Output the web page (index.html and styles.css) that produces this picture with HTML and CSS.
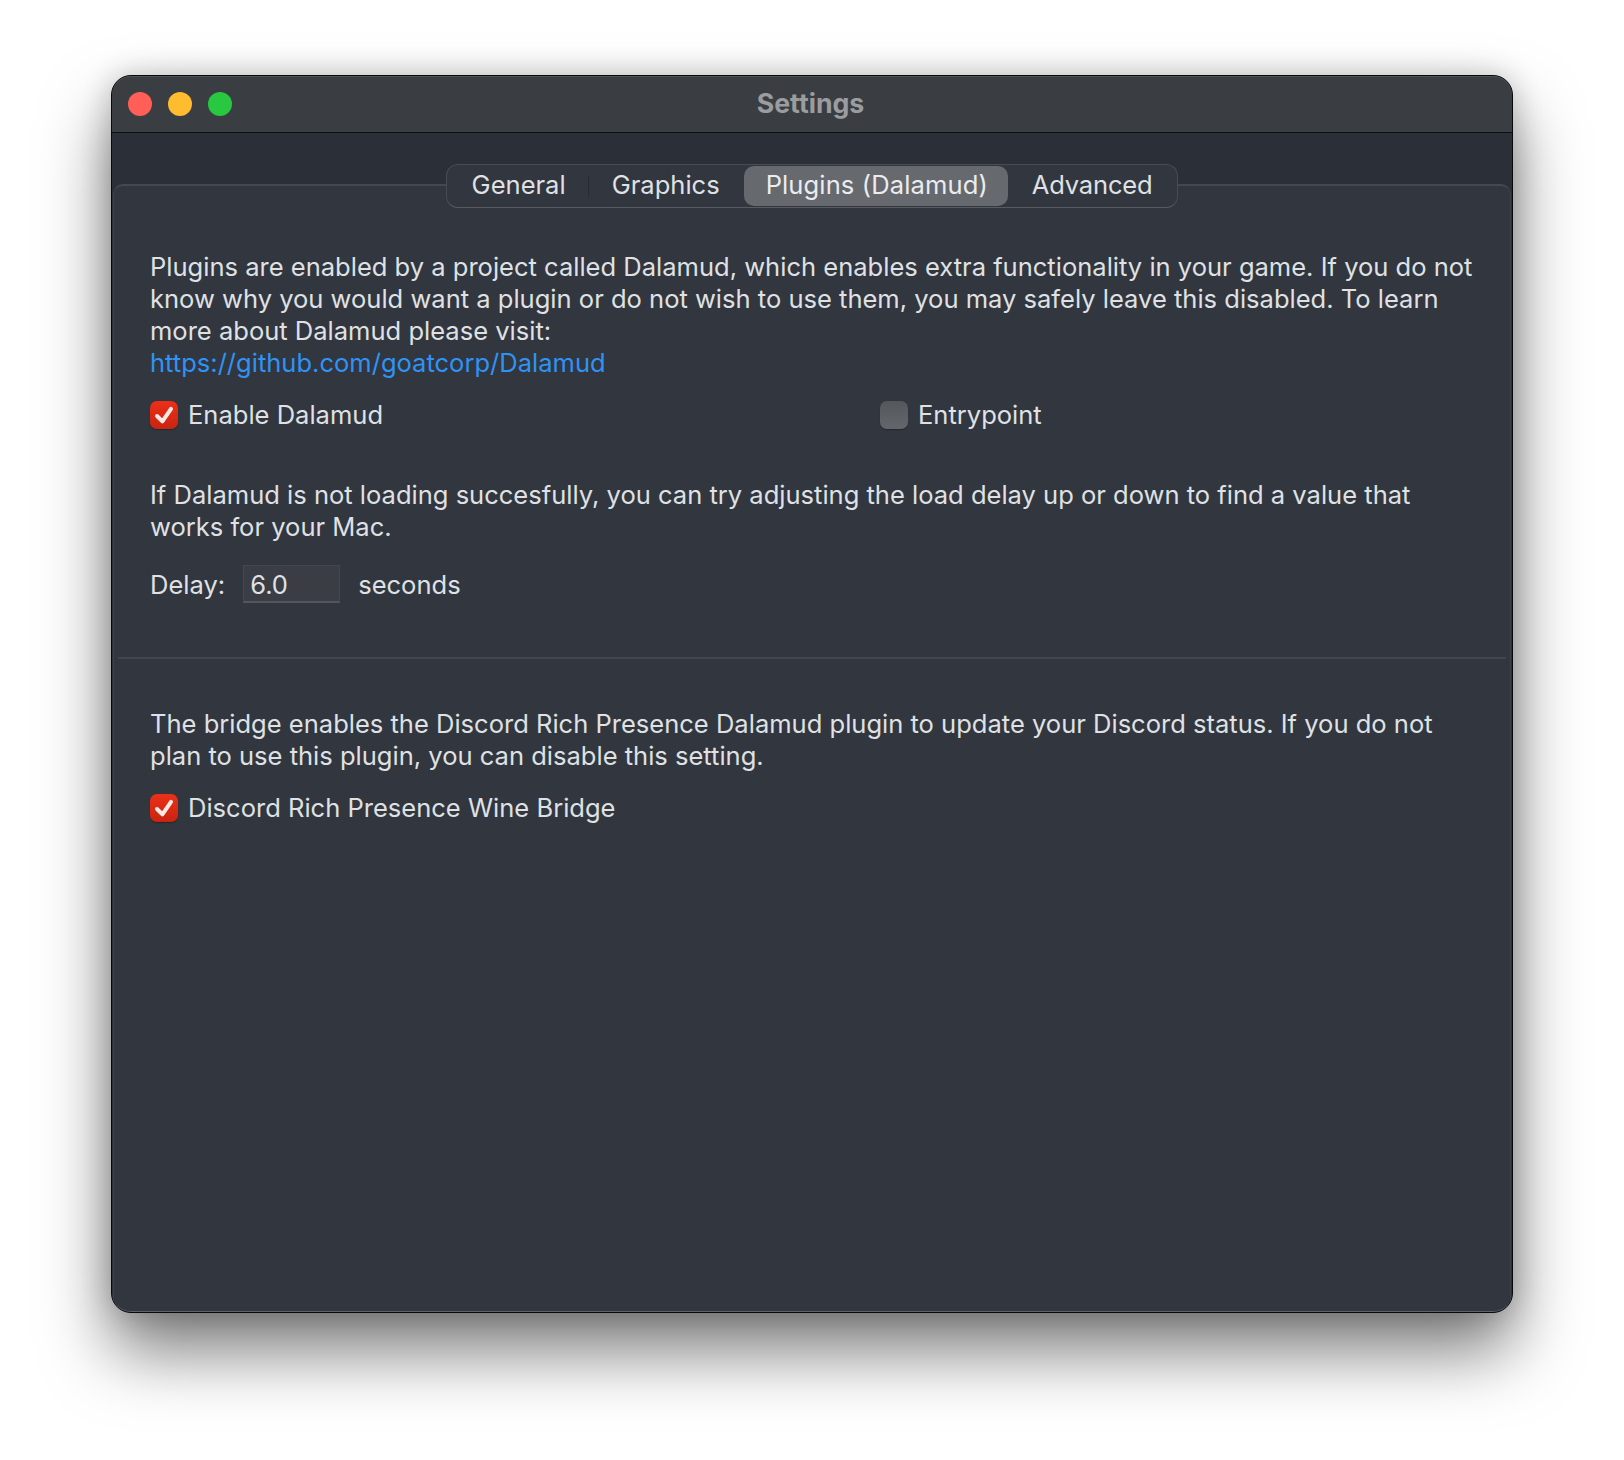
FILE: index.html
```html
<!DOCTYPE html>
<html lang="en">
<head>
    <meta charset="UTF-8">
    <title>Settings</title>
    <link rel="stylesheet" href="styles.css">
</head>
<body>
    <div class="window">
        <div class="titlebar">
            <div class="traffic">
                <span class="light red"></span>
                <span class="light yellow"></span>
                <span class="light green"></span>
            </div>
            <div class="title">Settings</div>
        </div>

        <div class="content">
            <div class="tabs">
                <div class="tab tab-general">General</div>
                <div class="tab tab-graphics">Graphics</div>
                <div class="tab tab-active">Plugins (Dalamud)</div>
                <div class="tab tab-advanced">Advanced</div>
            </div>

            <div class="group">
                <div class="section">
                    <p>Plugins are enabled by a project called Dalamud, which enables extra functionality in your game. If you do not<br>know why you would want a plugin or do not wish to use them, you may safely leave this disabled. To learn<br>more about Dalamud please visit:<br><a href="#" class="link">https://github.com/goatcorp/Dalamud</a></p>

                    <div class="check-row">
                        <label class="check check-half">
                            <span class="box box-on">
                                <svg viewBox="0 0 28 28" width="28" height="28"><path d="M7 15 L12.4 20.4 L21 7.8" fill="none" stroke="#fde8e3" stroke-width="4" stroke-linecap="round" stroke-linejoin="round"/></svg>
                            </span>
                            Enable Dalamud
                        </label>
                        <label class="check">
                            <span class="box box-off"></span>
                            Entrypoint
                        </label>
                    </div>

                    <p class="para-gap">If Dalamud is not loading succesfully, you can try adjusting the load delay up or down to find a value that<br>works for your Mac.</p>

                    <div class="delay-row">
                        <span class="delay-label">Delay:</span>
                        <div class="delay-input">6.0</div>
                        <span class="delay-label">seconds</span>
                    </div>
                </div>

                <div class="divider"></div>

                <div class="section section-bottom">
                    <p>The bridge enables the Discord Rich Presence Dalamud plugin to update your Discord status. If you do not<br>plan to use this plugin, you can disable this setting.</p>

                    <div class="check-row">
                        <label class="check">
                            <span class="box box-on">
                                <svg viewBox="0 0 28 28" width="28" height="28"><path d="M7 15 L12.4 20.4 L21 7.8" fill="none" stroke="#fde8e3" stroke-width="4" stroke-linecap="round" stroke-linejoin="round"/></svg>
                            </span>
                            Discord Rich Presence Wine Bridge
                        </label>
                    </div>
                </div>
            </div>
        </div>
    </div>
</body>
</html>
```

FILE: styles.css
```css
body {
    margin: 0;
    height: 1460px;
    overflow: hidden;
    background-color: #ffffff;
    color: #dfe1e4;
    font-family: Inter, "Noto Sans", sans-serif;
    font-size: 25.54px;
    line-height: 32px;
}

p {
    margin: 0;
}

.window {
    position: relative;
    box-sizing: border-box;
    width: 1402px;
    height: 1238px;
    margin: 75px 0 0 111px;
    display: flex;
    flex-direction: column;
    background-color: #32363e;
    border: 1px solid #08090a;
    border-radius: 20px;
    overflow: hidden;
    box-shadow: 0 38px 68px rgba(0, 0, 0, 0.52), 0 0 30px rgba(0, 0, 0, 0.2);
}

/* light inner edge of the window frame */
.window::after {
    content: "";
    position: absolute;
    top: 0;
    right: 0;
    bottom: 0;
    left: 0;
    border-radius: 19px;
    box-shadow: inset 0 -2px 0 -1px rgba(255, 255, 255, 0.22), inset 0 1px 0 rgba(255, 255, 255, 0.1);
    pointer-events: none;
}

.titlebar {
    position: relative;
    flex: none;
    height: 56px;
    display: flex;
    align-items: center;
    justify-content: center;
    background-color: #3a3e42;
    border-bottom: 1px solid #0e0f11;
}

.traffic {
    position: absolute;
    left: 16px;
    top: 16px;
    display: flex;
    gap: 16px;
}

.light {
    width: 24px;
    height: 24px;
    border-radius: 50%;
}

.red { background-color: #ff5f57; }
.yellow { background-color: #febc2e; }
.green { background-color: #28c840; }

.title {
    color: #9a9c9f;
    font-weight: 700;
    font-size: 26.7px;
    padding-bottom: 2px;
    padding-right: 3px;
}

.content {
    flex: 1;
    display: flex;
    flex-direction: column;
    background-color: #2b3038;
    padding-top: 31px;
}

.tabs {
    position: relative;
    z-index: 1;
    align-self: center;
    box-sizing: border-box;
    height: 44px;
    margin-bottom: -24px;
    padding: 1px 0;
    display: flex;
    align-items: stretch;
    background-color: #32363e;
    border: 1px solid #484c53;
    border-bottom-color: #585c62;
    border-radius: 12px;
}

.tab {
    display: flex;
    align-items: center;
    padding-bottom: 2px;
    border-radius: 10px;
}

.tab-general {
    position: relative;
    padding-left: 25px;
    padding-right: 23px;
}

.tab-general::after {
    content: "";
    position: absolute;
    right: 0;
    top: 10px;
    bottom: 10px;
    width: 1px;
    background-color: #272a30;
}

.tab-graphics {
    padding-left: 23px;
    padding-right: 24px;
}

.tab-active {
    padding-left: 22px;
    padding-right: 20px;
    letter-spacing: 0.12px;
    background-color: #66696e;
    color: #ebecee;
}

.tab-advanced {
    padding-left: 24px;
    padding-right: 25px;
    letter-spacing: -0.2px;
}

.group {
    flex: 1;
    margin: 0 1px;
    background-color: #32363e;
    border-top: 2px solid #44484f;
    border-left: 1px solid #3e4249;
    border-right: 1px solid #3e4249;
    border-radius: 10px 10px 0 0;
}

.section {
    padding: 65px 36px 0 36px;
}

.section-bottom {
    padding-top: 49px;
}

.link {
    color: #2f93f5;
    text-decoration: none;
}

.check-row {
    display: flex;
    margin-top: 22px;
    height: 28px;
    align-items: center;
}

.check {
    display: flex;
    align-items: center;
    gap: 10px;
}

.check-half {
    width: 730px;
}

.box {
    width: 28px;
    height: 28px;
    flex: none;
    border-radius: 7px;
    box-shadow: 0 1px 1px rgba(0, 0, 0, 0.3);
}

.box svg {
    display: block;
}

.box-on {
    background: linear-gradient(#ec3018, #c9240f);
}

.box-off {
    background: linear-gradient(#54585d, #63666b);
}

.para-gap {
    margin-top: 50px;
}

.delay-row {
    display: flex;
    align-items: center;
    margin-top: 22px;
    height: 38px;
    gap: 18px;
}

.delay-label {
    padding-top: 2px;
}

.delay-input {
    box-sizing: border-box;
    width: 97px;
    height: 38px;
    padding: 0 6px;
    line-height: 37px;
    background-color: #3a3e44;
    border: 1px solid #44484e;
    border-bottom: 2px solid #54575c;
}

.divider {
    height: 2px;
    margin: 54px 4px 0 4px;
    background-color: #42464d;
}
```
